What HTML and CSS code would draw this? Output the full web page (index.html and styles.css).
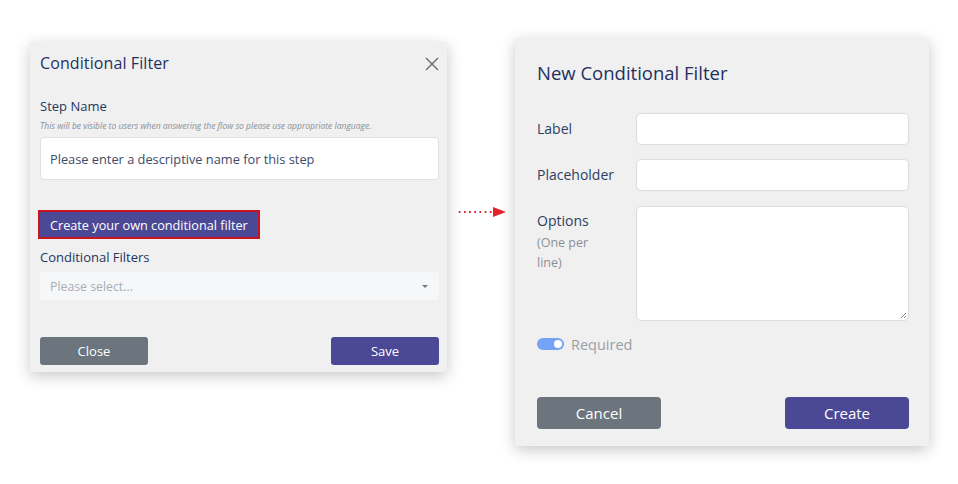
FILE: index.html
```html
<!DOCTYPE html>
<html>
<head>
<meta charset="utf-8">
<link rel="stylesheet" href="styles.css">
</head>
<body>
<div class="stage">
  <div class="modal modal-left">
    <div class="m-head">
      <div class="m-title">Conditional Filter</div>
      <svg class="close" width="14" height="14" viewBox="0 0 14 14"><path d="M1 1L13 13M13 1L1 13" stroke="#6b6b6b" stroke-width="1.4" fill="none"/></svg>
    </div>
    <div class="lbl step-lbl">Step Name</div>
    <div class="help">This will be visible to users when answering the flow so please use appropriate language.</div>
    <div class="input big-input">Please enter a descriptive name for this step</div>
    <div class="hl"><div class="btn btn-purple btn-own">Create your own conditional filter</div></div>
    <div class="lbl cf-lbl">Conditional Filters</div>
    <div class="select"><span>Please select...</span><span class="caret"></span></div>
    <div class="foot">
      <div class="btn btn-gray btn-sm">Close</div>
      <div class="btn btn-purple btn-sm">Save</div>
    </div>
  </div>
  <div class="arrow">
    <span class="dots"></span><span class="head"></span>
  </div>
  <div class="modal modal-right">
    <div class="r-title">New Conditional Filter</div>
    <div class="row">
      <div class="r-lbl">Label</div>
      <div class="r-input"></div>
    </div>
    <div class="row row-ph">
      <div class="r-lbl">Placeholder</div>
      <div class="r-input"></div>
    </div>
    <div class="row row-opt">
      <div class="r-lbl">Options<div class="sub">(One per<br>line)</div></div>
      <div class="r-input r-area">
        <svg class="grip" width="8" height="8" viewBox="0 0 8 8"><path d="M7 2L2 7M7 5L5 7" stroke="#888" stroke-width="1"/></svg>
      </div>
    </div>
    <div class="req">
      <span class="toggle"><span class="knob"></span></span>
      <span class="req-txt">Required</span>
    </div>
    <div class="r-foot">
      <div class="btn btn-gray btn-lg">Cancel</div>
      <div class="btn btn-purple btn-lg">Create</div>
    </div>
  </div>
</div>
</body>
</html>
```
FILE: styles.css
```css
* { box-sizing: border-box; }
html, body { margin: 0; padding: 0; background: #fff; }
body { font-family: "Open Sans", "DejaVu Sans", sans-serif; color: #2b3a5c; width: 958px; height: 484px; overflow: hidden; }
.stage { display: flex; align-items: flex-start; padding-left: 30px; }
.modal { background: #f0f0f0; box-shadow: 0 4px 14px rgba(0,0,0,0.22); }
.modal-left { width: 417px; height: 330px; margin-top: 42px; padding: 10px 8px 0 10px; }
.m-head { display: flex; justify-content: space-between; align-items: center; height: 22px; }
.m-title { font-size: 16px; color: #1f3160; letter-spacing: 0.1px; }
.close { margin-right: 0px; margin-top: 1px; }
.lbl { font-size: 13px; color: #24365e; font-weight: 500; }
.step-lbl { margin-top: 24px; line-height: 17px; }
.help { font-size: 8.5px; font-style: italic; color: #8a8f99; margin-top: 5px; line-height: 11px; }
.input { background: #fff; border: 1px solid #dde0e6; border-radius: 4px; }
.big-input { margin-top: 6px; height: 43px; padding-left: 9px; display: flex; align-items: center; font-size: 12.8px; color: #3d4a68; }
.hl { margin-top: 30px; display: inline-block; border: 2px solid #c8141e; margin-left: -2px; }
.btn { display: flex; align-items: center; justify-content: center; color: #fff; border-radius: 3px; }
.btn-purple { background: #4b4896; }
.btn-gray { background: #6c757d; }
.btn-own { border-radius: 0; height: 25px; padding: 0 10px; font-size: 12.7px; }
.cf-lbl { margin-top: 10px; line-height: 17px; }
.select { margin-top: 6px; height: 28px; background: #f6f7f9; border-radius: 4px; display: flex; align-items: center; justify-content: space-between; padding: 0 11px 0 10px; font-size: 12.3px; color: #a9adb5; }
.caret { width: 0; height: 0; border-left: 3px solid transparent; border-right: 3px solid transparent; border-top: 3px solid #777; }
.foot { display: flex; justify-content: space-between; margin-top: 37px; }
.btn-sm { width: 108px; height: 28px; font-size: 13px; }
.arrow { margin-top: 205px; margin-left: 10px; width: 58px; display: flex; align-items: center; height: 14px; }
.dots { width: 36px; height: 2px; background-image: radial-gradient(circle, #e2232a 1px, transparent 1.1px); background-size: 5.2px 2px; background-repeat: repeat-x; }
.head { width: 0; height: 0; border-top: 5px solid transparent; border-bottom: 5px solid transparent; border-left: 13px solid #e2232a; margin-left: 0; }
.modal-right { width: 414px; height: 408px; margin-top: 38px; padding: 23px 20px 0 22px; }
.r-title { font-size: 18.5px; color: #1f3160; line-height: 24px; margin-bottom: 28px; }
.row { display: flex; justify-content: space-between; margin-bottom: 14px; }
.row-ph { margin-bottom: 15px; }
.row-opt { margin-bottom: 15px; }
.r-lbl { font-size: 14px; color: #2e3e62; line-height: 32px; }
.r-input { width: 273px; height: 32px; background: #fff; border: 1px solid #d8dce3; border-radius: 5px; position: relative; }
.row-opt .r-lbl { line-height: 18px; padding-top: 6px; }
.sub { font-size: 12.5px; color: #8c9097; line-height: 20px; margin-top: 3px; }
.r-area { height: 115px; }
.grip { position: absolute; right: 1px; bottom: 1px; }
.req { display: flex; align-items: center; margin-top: 0; height: 16px; }
.toggle { width: 27px; height: 12px; border-radius: 6px; background: #74a4f3; position: relative; display: inline-block; }
.knob { position: absolute; right: 2px; top: 2px; width: 8px; height: 8px; border-radius: 50%; background: #fff; }
.req-txt { margin-left: 7px; font-size: 14.5px; color: #9a9ea6; }
.r-foot { display: flex; justify-content: space-between; margin-top: 45px; }
.btn-lg { width: 124px; height: 32px; font-size: 15px; border-radius: 4px; }
```
